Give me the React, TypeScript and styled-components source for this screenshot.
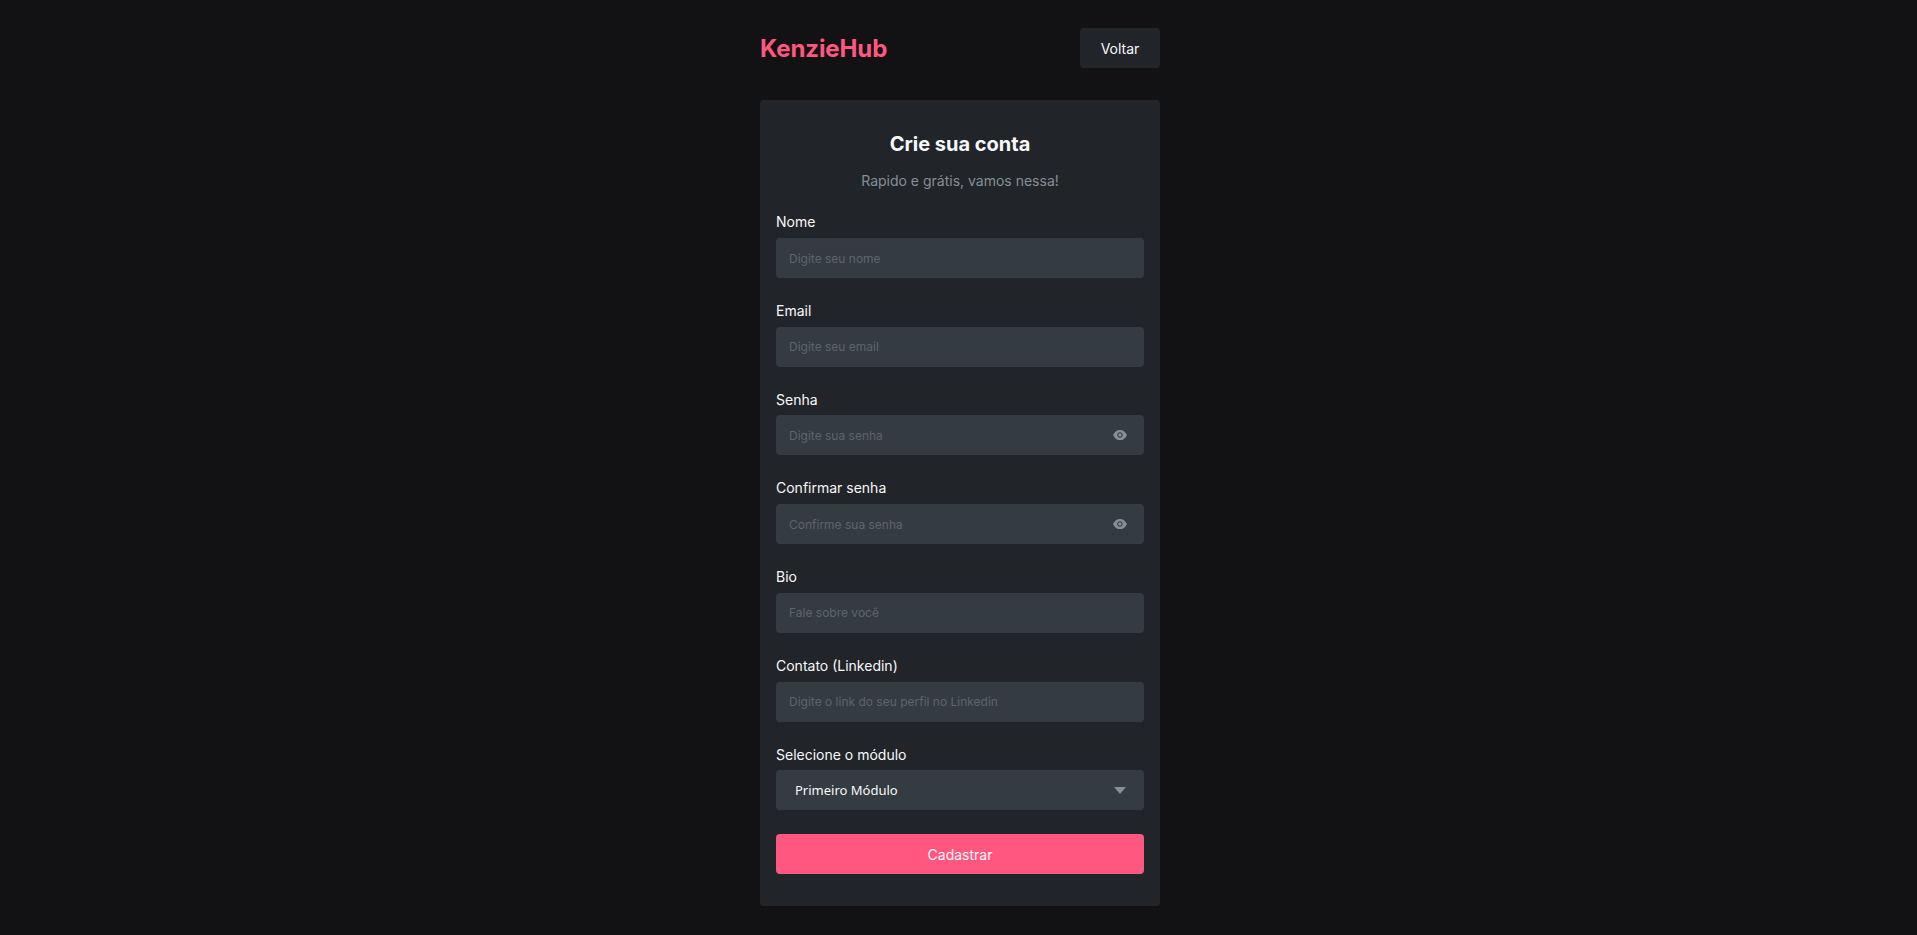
import { AiFillEye } from "react-icons/ai";
import styled, { createGlobalStyle } from "styled-components";

const GlobalStyle = createGlobalStyle`
    * {
        box-sizing: border-box;
        margin: 0;
        padding: 0;
    }
    body {
        background-color: #121214;
        font-family: Inter, "Liberation Sans", sans-serif;
        padding-left: 3px;
    }
`

const Page = styled.div`
    width: 400px;
    margin: 0 auto;
    padding-top: 28px;
    min-height: 935px;
`

const Header = styled.header`
    display: flex;
    align-items: center;
    justify-content: space-between;
    height: 40px;
    margin-bottom: 32px;
`

const Logo = styled.h1`
    margin-top: 1px;
    color: #ff577f;
    font-size: 24px;
    font-weight: 700;
    letter-spacing: -0.1px;
    line-height: 28px;
`

const BackButton = styled.button`
    width: 80px;
    height: 40px;
    background-color: #212529;
    color: #f8f9fa;
    border: 0;
    border-radius: 4px;
    font-family: inherit;
    font-size: 14px;
    font-weight: 400;
`

const Card = styled.form`
    display: flex;
    flex-direction: column;
    height: 806px;
    padding: 0 16px;
    background-color: #212529;
    border-radius: 4px;
`

const Title = styled.h2`
    margin-top: 32px;
    color: #f8f9fa;
    font-size: 20px;
    font-weight: 700;
    line-height: 24px;
    text-align: center;
`

const Subtitle = styled.p`
    margin-top: 14px;
    margin-bottom: 21.27px;
    color: #868e96;
    font-size: 14px;
    line-height: 22px;
    text-align: center;
`

const Field = styled.div`
    display: flex;
    flex-direction: column;
    margin-bottom: 24px;
`

const Label = styled.label`
    color: #f8f9fa;
    font-size: 14px;
    line-height: 16.73px;
    padding-top: 1px;
    margin-bottom: 7px;
`

const InputWrap = styled.div`
    position: relative;
    height: 40px;
`

const Input = styled.input`
    width: 100%;
    height: 40px;
    padding: 0 13px;
    background-color: #343b41;
    color: #f8f9fa;
    border: 0;
    border-radius: 4px;
    font-family: inherit;
    font-size: 12px;
    outline: none;

    &::placeholder {
        color: #868e96;
        opacity: 0.5;
    }
`

const EyeIcon = styled(AiFillEye)`
    position: absolute;
    top: 12px;
    right: 16px;
    width: 16px;
    height: 16px;
    color: #868e96;
`

const Select = styled.select`
    width: 100%;
    height: 40px;
    padding: 0 19px;
    appearance: none;
    background-color: #343b41;
    color: #f8f9fa;
    border: 0;
    border-radius: 4px;
    font-family: "Noto Sans", sans-serif;
    font-size: 13px;
    font-weight: 400;
    outline: none;
`

const Arrow = styled.svg`
    position: absolute;
    top: 17px;
    right: 18px;
    width: 12px;
    height: 7px;
    fill: #868e96;
    pointer-events: none;
`

const SubmitButton = styled.button`
    width: 100%;
    height: 40px;
    background-color: #ff577f;
    color: #f8f9fa;
    border: 0;
    border-radius: 4px;
    font-family: inherit;
    font-size: 14px;
`

const fields = [
    { label: "Nome", placeholder: "Digite seu nome", type: "text" },
    { label: "Email", placeholder: "Digite seu email", type: "email" },
    { label: "Senha", placeholder: "Digite sua senha", type: "password", eye: true },
    { label: "Confirmar senha", placeholder: "Confirme sua senha", type: "password", eye: true },
    { label: "Bio", placeholder: "Fale sobre você", type: "text" },
    { label: "Contato (Linkedin)", placeholder: "Digite o link do seu perfil no Linkedin", type: "text" },
]

const App = () => {
    return (
        <>
            <GlobalStyle />
            <Page>
                <Header>
                    <Logo>KenzieHub</Logo>
                    <BackButton type="button">Voltar</BackButton>
                </Header>
                <Card>
                    <Title>Crie sua conta</Title>
                    <Subtitle>Rapido e grátis, vamos nessa!</Subtitle>
                    {fields.map((field) => (
                        <Field key={field.label}>
                            <Label>{field.label}</Label>
                            <InputWrap>
                                <Input type={field.type} placeholder={field.placeholder} />
                                {field.eye && <EyeIcon />}
                            </InputWrap>
                        </Field>
                    ))}
                    <Field>
                        <Label>Selecione o módulo</Label>
                        <InputWrap>
                            <Select defaultValue="Primeiro Módulo">
                                <option>Primeiro Módulo</option>
                                <option>Segundo Módulo</option>
                                <option>Terceiro Módulo</option>
                            </Select>
                            <Arrow viewBox="0 0 12 7">
                                <path d="M0 0h12L6 7z" />
                            </Arrow>
                        </InputWrap>
                    </Field>
                    <SubmitButton type="submit">Cadastrar</SubmitButton>
                </Card>
            </Page>
        </>
    )
}

export default App;
